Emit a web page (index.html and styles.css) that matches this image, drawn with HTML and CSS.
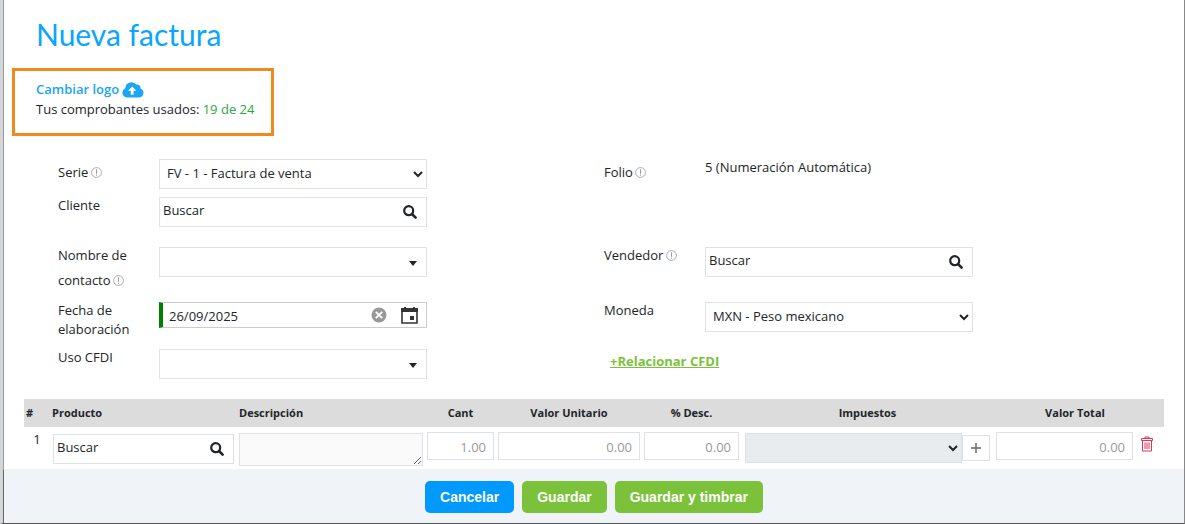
FILE: index.html
```html
<!DOCTYPE html>
<html lang="es">
<head>
    <meta charset="UTF-8">
    <meta name="viewport" content="width=device-width, initial-scale=1.0">
    <title>Nueva factura</title>
    <link rel="stylesheet" href="styles.css">
</head>
<body>
    <!-- Iconos compartidos -->
    <svg class="sprite" aria-hidden="true">
        <symbol id="icon-search" viewBox="0 0 14 14">
            <circle cx="5.7" cy="5.7" r="4.5" fill="none" stroke="currentColor" stroke-width="2.2"/>
            <path d="M9 9l3.600 3.600" stroke="currentColor" stroke-width="2.6" stroke-linecap="round"/>
        </symbol>
        <symbol id="icon-info" viewBox="0 0 11 11">
            <circle cx="5.5" cy="5.5" r="4.9" fill="none" stroke="currentColor" stroke-width="0.8"/>
            <path d="M5.5 2.4v4.4M5.5 7.6v1" stroke="currentColor" stroke-width="1"/>
        </symbol>
    </svg>

    <main>
        <h1>Nueva factura</h1>

        <div class="logo-box">
            <a href="#" class="change-logo">Cambiar logo
                <svg width="22" height="16" viewBox="0 0 22 16">
                    <path fill="currentColor" d="M5 15.5a4.800 4.800 0 0 1-1.700-9.200A6 6 0 0 1 14 2.600a3.400 3.400 0 0 1 4.400 4A4.600 4.600 0 0 1 17.300 15.500z"/>
                    <path fill="#fff" d="M10.200 4.400l4.200 4.300h-2.800v4H8.800v-4H6z"/>
                </svg>
            </a>
            <p>Tus comprobantes usados: <span class="used">19 de 24</span></p>
        </div>

        <form class="invoice" id="invoice">
            <div class="row">
                <div class="group">
                    <label for="serie" class="low">Serie <svg class="info"><use href="#icon-info"/></svg></label>
                    <select id="serie" class="field"><option>FV - 1 - Factura de venta</option></select>
                </div>
                <div class="group">
                    <span class="label low">Folio <svg class="info"><use href="#icon-info"/></svg></span>
                    <span class="folio">5 (Numeración Automática)</span>
                </div>
            </div>
            <div class="row client">
                <div class="group">
                    <label for="cliente">Cliente</label>
                    <div class="field search">
                        <input type="text" id="cliente" placeholder="Buscar">
                        <button type="button" aria-label="Buscar cliente"><svg><use href="#icon-search"/></svg></button>
                    </div>
                </div>
            </div>
            <div class="row contact">
                <div class="group">
                    <label for="contacto" class="tall">Nombre de contacto <svg class="info"><use href="#icon-info"/></svg></label>
                    <div class="field combo"><select id="contacto"><option></option></select></div>
                </div>
                <div class="group">
                    <label for="vendedor" class="tall">Vendedor <svg class="info"><use href="#icon-info"/></svg></label>
                    <div class="field search">
                        <input type="text" id="vendedor" placeholder="Buscar">
                        <button type="button" aria-label="Buscar vendedor"><svg><use href="#icon-search"/></svg></button>
                    </div>
                </div>
            </div>
            <div class="row date-row">
                <div class="group">
                    <label for="fecha">Fecha de elaboración</label>
                    <div class="field date">
                        <input type="text" id="fecha" value="26/09/2025">
                        <button type="button" aria-label="Borrar fecha">
                            <svg width="16" height="16" viewBox="0 0 16 16">
                                <circle cx="8" cy="8" r="7.5" fill="#999"/>
                                <path d="M4.8 4.8l6.4 6.4M11.2 4.8l-6.4 6.4" stroke="#fff" stroke-width="1.8"/>
                            </svg>
                        </button>
                        <button type="button" aria-label="Abrir calendario">
                            <svg width="17" height="17" viewBox="0 0 17 17">
                                <path d="M1 2h15v14H1z" fill="none" stroke="#333" stroke-width="1.6"/>
                                <path d="M0 1h17v4H0zM3 0h2v2H3zM12 0h2v2h-2zM9 9h4v4H9z" fill="#333"/>
                            </svg>
                        </button>
                    </div>
                </div>
                <div class="group">
                    <label for="moneda">Moneda</label>
                    <select id="moneda" class="field"><option>MXN - Peso mexicano</option></select>
                </div>
            </div>
            <div class="row">
                <div class="group">
                    <label for="cfdi">Uso CFDI</label>
                    <div class="field combo"><select id="cfdi"><option></option></select></div>
                </div>
                <div class="group">
                    <a href="#" class="relate">+Relacionar CFDI</a>
                </div>
            </div>
        </form>

        <table class="items">
            <colgroup>
                <col class="c-num"><col class="c-prod"><col class="c-desc"><col class="c-cant"><col class="c-unit">
                <col class="c-dto"><col class="c-tax"><col class="c-total"><col class="c-del">
            </colgroup>
            <thead>
                <tr>
                    <th class="left">#</th>
                    <th class="left">Producto</th>
                    <th class="left">Descripción</th>
                    <th>Cant</th>
                    <th>Valor Unitario</th>
                    <th>% Desc.</th>
                    <th>Impuestos</th>
                    <th colspan="2" class="total">Valor Total</th>
                </tr>
            </thead>
            <tbody>
                <tr>
                    <td class="num">1</td>
                    <td>
                        <div class="search">
                            <input type="text" placeholder="Buscar" aria-label="Producto">
                            <button type="button" aria-label="Buscar producto"><svg><use href="#icon-search"/></svg></button>
                        </div>
                    </td>
                    <td><textarea aria-label="Descripción"></textarea></td>
                    <td><input type="text" class="amount" placeholder="1.00" aria-label="Cantidad"></td>
                    <td><input type="text" class="amount" placeholder="0.00" aria-label="Valor unitario"></td>
                    <td><input type="text" class="amount" placeholder="0.00" aria-label="Descuento"></td>
                    <td>
                        <div class="taxes">
                            <select aria-label="Impuestos"><option></option></select>
                            <button type="button" aria-label="Agregar impuesto">
                                <svg width="10" height="10" viewBox="0 0 10 10"><path d="M5 0v10M0 5h10" stroke="#666" stroke-width="1.4"/></svg>
                            </button>
                        </div>
                    </td>
                    <td><input type="text" class="amount" placeholder="0.00" aria-label="Valor total"></td>
                    <td>
                        <button type="button" class="delete" aria-label="Eliminar">
                            <svg width="12" height="16" viewBox="0 0 12 16">
                                <path d="M.5 2.5h11v2H.5zM4 2.5V1h4v1.500M1.500 4.500V15h9V4.500M4 6.500V13M6 6.500V13M8 6.500V13" fill="none" stroke="#dc3558"/>
                            </svg>
                        </button>
                    </td>
                </tr>
            </tbody>
        </table>
    </main>

    <footer>
        <button type="button" class="btn cancel">Cancelar</button>
        <button type="submit" form="invoice" class="btn">Guardar</button>
        <button type="submit" form="invoice" class="btn">Guardar y timbrar</button>
    </footer>
</body>
</html>
```
FILE: styles.css
```css
* {
    box-sizing: border-box;
}
body {
    display: flex;
    flex-direction: column;
    min-height: 100vh;
    margin: 0;
    border-left: 3px solid #d3d7d9;
    border-right: 1px solid #888;
    border-bottom: 1px solid #555;
    font-family: "Open Sans", sans-serif;
    font-size: 13px;
    line-height: 19px;
    color: #212529;
    background: #fff;
}
input, select, textarea, button {
    margin: 0;
    font: inherit;
    color: inherit;
}
button {
    display: flex;
    align-items: center;
    justify-content: center;
    padding: 0;
    border: 0;
    background: none;
    cursor: pointer;
}
.sprite {
    position: absolute;
    width: 0;
    height: 0;
}
main {
    flex: 1;
    border-left: 1px solid #999;
}
h1 {
    margin: 0;
    padding: 15px 32px 0;
    font-family: Lato, sans-serif;
    font-size: 30px;
    font-weight: 400;
    line-height: 38px;
    color: #0aa5ff;
}

/* Logo y comprobantes */
.logo-box {
    width: 262px;
    height: 68px;
    margin: 15px 0 0 8px;
    padding: 8px 21px;
    border: 3px solid #f08a1d;
}
.logo-box p {
    margin: 0;
    white-space: nowrap;
}
.change-logo {
    display: flex;
    align-items: center;
    gap: 3px;
    height: 21px;
    font-weight: 600;
    color: #1ba5f8;
    text-decoration: none;
}
.used {
    color: #28a745;
}

/* Formulario */
.invoice {
    padding: 23px 34px 0 54px;
}
.row {
    display: grid;
    grid-template-columns: 1fr 1fr;
    min-height: 38px;
}
.row.client {
    min-height: 50px;
}
.row.contact {
    min-height: 55px;
}
.row.date-row {
    min-height: 47px;
}
.group {
    display: flex;
    align-items: flex-start;
}
label, .label {
    flex: 0 0 101px;
    margin-top: -1px;
    padding-right: 20px;
}
.low {
    padding-top: 5px;
}
.tall {
    margin-top: -4px;
    line-height: 25px;
}
.info {
    width: 11px;
    height: 11px;
    margin-left: -1px;
    color: #999;
    vertical-align: -1px;
}
.field {
    width: 49%;
    height: 30px;
    border: 1px solid #dee2e6;
    background: #fff;
}
select.field {
    padding: 0 3px 2px;
}
.folio {
    margin-top: -1px;
    white-space: nowrap;
}
.search, .combo, .date {
    display: flex;
    align-items: center;
}
.search input, .date input {
    flex: 1;
    min-width: 0;
    padding: 0 3px;
    border: 0;
    background: none;
    outline: none;
}
.search input {
    padding-bottom: 4px;
}
.search input::placeholder {
    color: #212529;
    opacity: 1;
}
.search button {
    width: 32px;
    height: 28px;
}
.search svg {
    width: 14px;
    height: 14px;
}
.combo {
    position: relative;
}
.combo select {
    width: 100%;
    height: 100%;
    border: 0;
    background: none;
    appearance: none;
}
.combo::after {
    content: "";
    position: absolute;
    right: 9px;
    top: 13px;
    border: 4px solid transparent;
    border-top: 5px solid #212529;
    border-bottom: 0;
    pointer-events: none;
}
.date {
    height: 26px;
    gap: 14px;
    padding-right: 8px;
    border-color: #ccc;
    border-left: 4px solid green;
}
.date input {
    padding: 2px 6px 0;
}
.relate {
    padding: 3px 0 0 6px;
    font-weight: 700;
    color: #7bc23a;
}

/* Detalle */
.items {
    width: calc(100% - 40px);
    margin: 12px 20px 0;
    border-collapse: collapse;
    table-layout: fixed;
}
.c-num { width: 26px; }
.c-prod { width: 187px; }
.c-desc { width: 188px; }
.c-cant { width: 71px; }
.c-unit { width: 146px; }
.c-dto { width: 99px; }
.c-total { width: 141px; }
.c-del { width: 29px; }
.items th {
    height: 28px;
    padding: 0 0 1px;
    font-size: 11px;
    font-weight: 700;
    background: #dcdcdc;
}
.items th.left {
    padding-left: 2px;
    text-align: left;
}
.items th.total {
    padding-right: 8px;
}
.items td {
    padding: 5px 2px 4px;
    vertical-align: top;
}
.items td.num {
    padding-top: 3px;
    text-align: center;
}
.items .search {
    height: 30px;
    margin: 2px 1px 0;
    border: 1px solid #dee2e6;
}
.items textarea {
    display: block;
    width: 100%;
    height: 33px;
    margin-top: 1px;
    border: 1px solid #dee2e6;
    background: #fafafa;
}
.amount {
    display: block;
    width: 100%;
    height: 28px;
    padding: 2px 7px 0;
    border: 1px solid #dee2e6;
    text-align: right;
}
.amount::placeholder {
    color: #999;
    opacity: 1;
}
.taxes {
    display: flex;
    align-items: center;
    padding: 1px 2px 0;
}
.taxes select {
    flex: 1;
    min-width: 0;
    height: 30px;
    border: 1px solid #dee2e6;
    border-radius: 0;
    background: #e9ecef;
}
.taxes button {
    width: 28px;
    height: 26px;
    border: 1px solid #dee2e6;
}
.delete {
    width: 20px;
    height: 24px;
}

/* Acciones */
footer {
    position: sticky;
    bottom: 0;
    display: flex;
    justify-content: center;
    gap: 8px;
    padding: 11px 0 10px;
    border-left: 1px solid #666;
    background: #f0f3f8;
    box-shadow: 0 0 2px rgba(0, 0, 0, 0.15);
}
.btn {
    height: 32px;
    padding: 0 15px;
    border-radius: 5px;
    font-family: "Liberation Sans", Arial, sans-serif;
    font-size: 14px;
    font-weight: 700;
    color: #fff;
    background: #7bc23a;
}
.btn.cancel {
    background: #0099ff;
}
```
